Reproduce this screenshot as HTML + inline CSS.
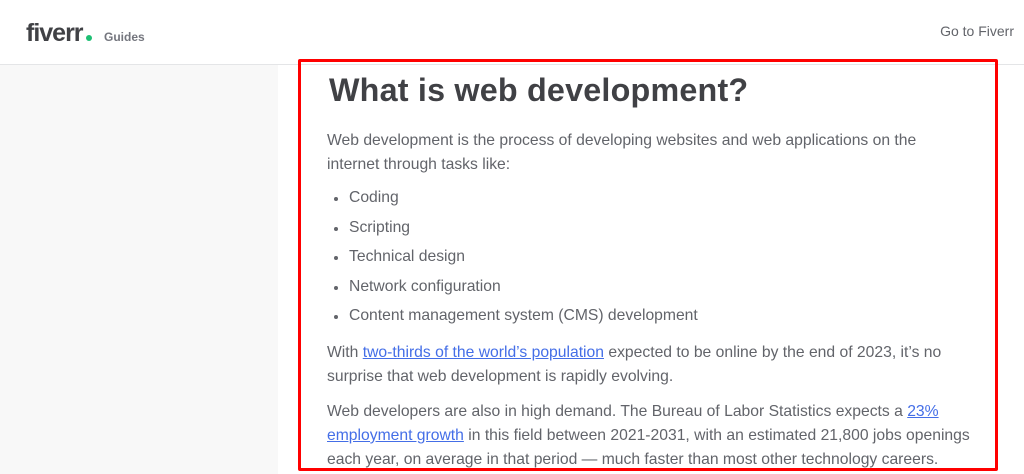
<!DOCTYPE html>
<html><head><style>
body{margin:0;width:1024px;height:474px;overflow:hidden;background:#fff;font-family:"Liberation Sans",sans-serif;color:#62646a;position:relative}
.hdr{position:absolute;left:0;top:0;width:1024px;height:64px;border-bottom:1px solid #e4e5e7;background:#fff}
.logo{position:absolute;left:26px;top:19px;font-size:25px;font-weight:bold;color:#404145;letter-spacing:-1px}
.dot{display:inline-block;width:6px;height:6px;border-radius:50%;background:#1dbf73;margin-left:3px}
.guides{position:absolute;left:104px;top:30px;font-size:12px;font-weight:bold;color:#74767e}
.go{position:absolute;right:10px;top:23px;font-size:14px;color:#62646a}
.side{position:absolute;left:0;top:65px;width:278px;height:409px;background:#f8f8f8}
.box{position:absolute;left:298px;top:59px;width:694px;height:406px;border:3px solid #f00;border-radius:2px}
.c{position:absolute;left:327px;top:0;width:650px}
h1{position:absolute;top:72px;left:2px;margin:0;font-size:32.3px;color:#404145;white-space:nowrap;letter-spacing:0.2px}
.t{position:absolute;font-size:15.7px;line-height:24px;white-space:nowrap}
a{color:#446ee7;text-decoration:underline}
.b{position:absolute;font-size:15.7px;white-space:nowrap}
.b:before{content:"";position:absolute;left:-15px;top:8px;width:4px;height:4px;border-radius:50%;background:#62646a}
</style></head><body>
<div class="hdr"><div class="logo">fiverr<span class="dot"></span></div><div class="guides">Guides</div><div class="go">Go to Fiverr</div></div>
<div class="side"></div>
<div class="box"></div>
<div class="c">
<h1>What is web development?</h1>
<div class="t" style="top:129px">Web development is the process of developing websites and web applications on the<br>internet through tasks like:</div>
<div class="b" style="left:22px;top:189px">Coding</div>
<div class="b" style="left:22px;top:219px">Scripting</div>
<div class="b" style="left:22px;top:248px">Technical design</div>
<div class="b" style="left:22px;top:278px">Network configuration</div>
<div class="b" style="left:22px;top:307px">Content management system (CMS) development</div>
<div class="t" style="top:341px">With <a>two-thirds of the world’s population</a> expected to be online by the end of 2023, it’s no<br>surprise that web development is rapidly evolving.</div>
<div class="t" style="top:400px">Web developers are also in high demand. The Bureau of Labor Statistics expects a <a>23%</a><br><a>employment growth</a> in this field between 2021-2031, with an estimated 21,800 jobs openings<br>each year, on average in that period — much faster than most other technology careers.</div>
</div>
</body></html>
